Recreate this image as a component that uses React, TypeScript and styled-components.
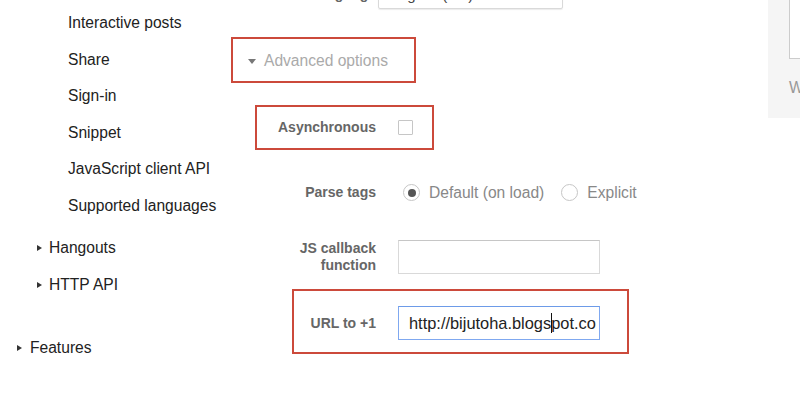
import React from "react";
import styled, { createGlobalStyle } from "styled-components";

const GlobalStyle = createGlobalStyle`
  html, body {
    margin: 0;
    padding: 0;
    background: #fff;
  }
  body {
    font-family: "Liberation Sans", Arial, sans-serif;
    overflow: hidden;
  }
`;

const Page = styled.div`
  display: flex;
  width: 800px;
  height: 400px;
  overflow: hidden;
`;

const Nav = styled.ul`
  list-style: none;
  margin: 0;
  padding: 5px 0 0;
  width: 231px;
  flex: none;
`;

const NavItem = styled.li<{ $level: number; $gap?: number }>`
  display: flex;
  align-items: center;
  height: 36.5px;
  margin-top: ${(p) => p.$gap ?? 0}px;
  padding-left: ${(p) => [17, 37, 68][p.$level]}px;
  font-size: 15.6px;
  color: #222;
  white-space: nowrap;
`;

const NavCaret = styled.span<{ $space: number }>`
  width: 0;
  height: 0;
  border-top: 3px solid transparent;
  border-bottom: 3px solid transparent;
  border-left: 5px solid #333;
  margin-right: ${(p) => p.$space}px;
`;

const Main = styled.div`
  flex: 1;
  display: flex;
  flex-direction: column;
`;

const Row = styled.div<{ $top: number; $h: number }>`
  position: relative;
  display: grid;
  grid-template-columns: 145px 202px;
  column-gap: 22px;
  align-items: center;
  margin-top: ${(p) => p.$top}px;
  height: ${(p) => p.$h}px;
`;

const Label = styled.div`
  text-align: right;
  font-size: 14px;
  line-height: 17px;
  font-weight: bold;
  color: #666;
`;

const Highlight = styled.div<{ $x: number; $y: number; $w: number; $h: number }>`
  position: absolute;
  left: ${(p) => p.$x}px;
  top: ${(p) => p.$y}px;
  width: ${(p) => p.$w}px;
  height: ${(p) => p.$h}px;
  box-sizing: border-box;
  border: 2px solid #cc4a3b;
  pointer-events: none;
`;

const Select = styled.div`
  margin-left: -20px;
  width: 185px;
  height: 30px;
  box-sizing: border-box;
  border: 1px solid #d9d9d9;
  border-radius: 2px;
  box-shadow: 0 1px 1px rgba(0, 0, 0, 0.08);
  padding: 0 10px;
  display: flex;
  align-items: center;
  font-size: 15px;
  color: #444;
`;

const Toggle = styled.div`
  position: relative;
  margin-top: 28px;
  height: 46px;
  box-sizing: border-box;
  display: flex;
  align-items: center;
  gap: 8px;
  padding: 2px 0 0 17px;
  font-size: 15.6px;
  color: #aaa;
`;

const DownCaret = styled.span`
  width: 0;
  height: 0;
  border-left: 4px solid transparent;
  border-right: 4px solid transparent;
  border-top: 5px solid #777;
`;

const Checkbox = styled.span`
  width: 15px;
  height: 15px;
  box-sizing: border-box;
  border: 1px solid #c6c6c6;
  border-radius: 1px;
`;

const RadioGroup = styled.div`
  display: flex;
  align-items: center;
  margin-left: 5px;
  padding-top: 1px;
  white-space: nowrap;
  font-size: 15.6px;
  color: #888;
`;

const RadioOption = styled.label`
  display: flex;
  align-items: center;
  gap: 9px;
  margin-right: 17px;
`;

const Radio = styled.span<{ $checked?: boolean }>`
  width: 17px;
  height: 17px;
  box-sizing: border-box;
  border: 1px solid #c6c6c6;
  border-radius: 50%;
  display: flex;
  align-items: center;
  justify-content: center;

  &::after {
    content: "";
    display: ${(p) => (p.$checked ? "block" : "none")};
    width: 8px;
    height: 8px;
    border-radius: 50%;
    background: #555;
  }
`;

const TextField = styled.div<{ $focused?: boolean }>`
  width: 202px;
  height: 34px;
  box-sizing: border-box;
  border: 1px solid ${(p) => (p.$focused ? "#7fa8f0" : "#d9d9d9")};
  border-top-color: ${(p) => (p.$focused ? "#6d9be8" : "#c6c6c6")};
  padding: 0 0 0 10px;
  display: flex;
  align-items: center;
  overflow: hidden;
  white-space: nowrap;
  font-size: 16.4px;
  color: #222;
`;

const Cursor = styled.span`
  display: inline-block;
  width: 0;
  height: 20px;
  border-left: 1px solid #111;
  margin-right: -1px;
`;

const Aside = styled.div`
  flex: none;
  width: 32px;
  height: 118px;
  background: #f5f5f5;
  padding-left: 21px;
  box-sizing: border-box;
  overflow: hidden;
`;

const PreviewBox = styled.div`
  margin-top: -10px;
  height: 67px;
  width: 40px;
  background: #fff;
  border: 1px solid #ccc;
`;

const PreviewNote = styled.div`
  margin-top: 20px;
  font-size: 15.6px;
  color: #999;
`;

const App = () => {
  return (
    <>
      <GlobalStyle />
      <Page>
        <Nav>
          <NavItem $level={2}>Interactive posts</NavItem>
          <NavItem $level={2}>Share</NavItem>
          <NavItem $level={2}>Sign-in</NavItem>
          <NavItem $level={2}>Snippet</NavItem>
          <NavItem $level={2}>JavaScript client API</NavItem>
          <NavItem $level={2}>Supported languages</NavItem>
          <NavItem $level={1} $gap={5.75}>
            <NavCaret $space={7} />
            Hangouts
          </NavItem>
          <NavItem $level={1}>
            <NavCaret $space={7} />
            HTTP API
          </NavItem>
          <NavItem $level={0} $gap={27}>
            <NavCaret $space={8} />
            Features
          </NavItem>
          <NavItem $level={0} $gap={22}>
            <NavCaret $space={8} />
            Android
          </NavItem>
        </Nav>

        <Main>
          <Row $top={-21} $h={30}>
            <Label>Language</Label>
            <Select>English (US)</Select>
          </Row>

          <Toggle>
            <DownCaret />
            Advanced options
            <Highlight $x={0} $y={0} $w={185} $h={46} />
          </Toggle>

          <Row $top={22} $h={45}>
            <Label>Asynchronous</Label>
            <Checkbox />
            <Highlight $x={24} $y={0} $w={179} $h={45} />
          </Row>

          <Row $top={25} $h={34}>
            <Label>Parse tags</Label>
            <RadioGroup>
              <RadioOption>
                <Radio $checked />
                Default (on load)
              </RadioOption>
              <RadioOption>
                <Radio />
                Explicit
              </RadioOption>
            </RadioGroup>
          </Row>

          <Row $top={31} $h={34}>
            <Label>
              JS callback
              <br />
              function
            </Label>
            <TextField />
          </Row>

          <Row $top={32} $h={34}>
            <Label>URL to +1</Label>
            <TextField $focused>
              http://bijutoha.blogs
              <Cursor />
              pot.co
            </TextField>
            <Highlight $x={61} $y={-17} $w={337} $h={65} />
          </Row>
        </Main>

        <Aside>
          <PreviewBox />
          <PreviewNote>W</PreviewNote>
        </Aside>
      </Page>
    </>
  );
};

export default App;
